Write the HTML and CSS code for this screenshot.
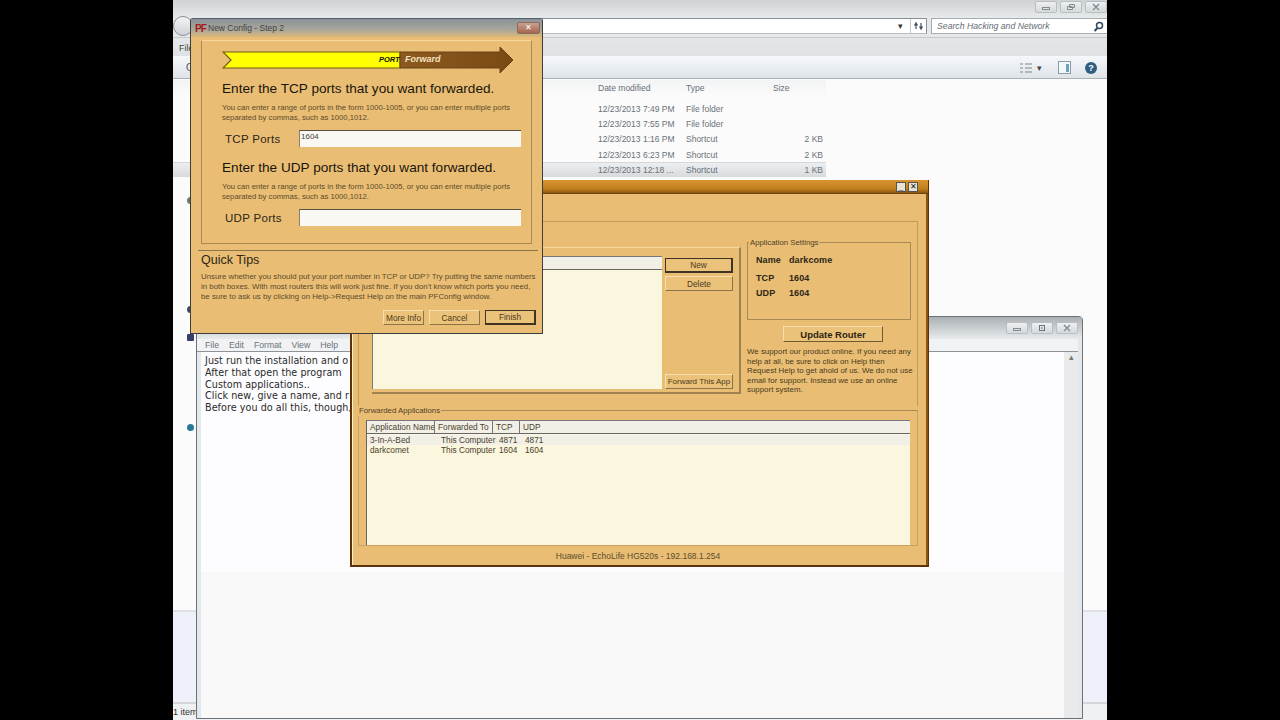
FILE: index.html
```html
<!DOCTYPE html>
<html lang="en">
<head>
    <meta charset="UTF-8">
    <title>New Config - Step 2</title>
    <link rel="stylesheet" href="styles.css">
</head>
<body>
    <div class="screen">
        <!-- explorer window behind everything -->
        <div class="explorer">
            <div class="exp-title">
                <div class="caption-btns">
                    <span class="cap-btn"><svg width="10" height="8" viewBox="0 0 10 8"><rect x="1.5" y="4.5" width="7" height="2" fill="none" stroke="#858b90"/></svg></span>
                    <span class="cap-btn"><svg width="10" height="8" viewBox="0 0 10 8"><path d="M3.5 1.5h5v3h-5zM1.5 3.5h5v3h-5z" fill="#e6e9eb" stroke="#858b90"/></svg></span>
                    <span class="cap-btn"><svg width="10" height="8" viewBox="0 0 10 8"><path d="M2 1l6 6M8 1L2 7" stroke="#858b90" stroke-width="1.4"/></svg></span>
                </div>
            </div>
            <div class="exp-address">
                <div class="back-orb"></div>
                <div class="addr-box">
                    <span class="addr-arrow">&#9662;</span>
                    <span class="addr-refresh">
                        <svg width="14" height="10" viewBox="0 0 14 10"><path d="M4 8V3M2.5 4.5L4 2l1.5 2.5M9 2v5M7.500 5.500L9 8l1.500-2.500" fill="none" stroke="#3d4a5c" stroke-width="1.200"/></svg>
                    </span>
                </div>
                <div class="search-box">
                    <span>Search Hacking and Network</span>
                    <svg width="11" height="11" viewBox="0 0 11 11"><circle cx="6.500" cy="4.500" r="3" fill="none" stroke="#30465f" stroke-width="1.500"/><path d="M4.500 7L1.500 10" stroke="#30465f" stroke-width="2"/></svg>
                </div>
            </div>
            <div class="exp-menu"><span>File</span></div>
            <div class="exp-toolbar">
                <span class="tool-o">O</span>
                <div class="tool-icons">
                    <svg width="14" height="12" viewBox="0 0 14 12"><path d="M1 2h3M1 6h3M1 10h3M6 2h7M6 6h7M6 10h7" stroke="#a3a8ae" stroke-width="1.500"/></svg>
                    <span class="tool-caret">&#9662;</span>
                    <svg class="tool-pane" width="13" height="13" viewBox="0 0 13 13"><rect x="0.500" y="0.500" width="12" height="12" fill="#f4f7fa" stroke="#8d9ba6"/><rect x="8" y="3" width="3" height="8" fill="#6ba1bb"/></svg>
                    <span class="tool-help">?</span>
                </div>
            </div>
            <div class="file-list">
                <div class="file-row file-head"><span>Date modified</span><span>Type</span><span>Size</span></div>
                <div class="file-row"><span>12/23/2013 7:49 PM</span><span>File folder</span><span></span></div>
                <div class="file-row"><span>12/23/2013 7:55 PM</span><span>File folder</span><span></span></div>
                <div class="file-row"><span>12/23/2013 1:16 PM</span><span>Shortcut</span><span class="size">2 KB</span></div>
                <div class="file-row"><span>12/23/2013 6:23 PM</span><span>Shortcut</span><span class="size">2 KB</span></div>
                <div class="file-row file-sel"><span>12/23/2013 12:18 ...</span><span>Shortcut</span><span class="size">1 KB</span></div>
            </div>
            <div class="exp-details"></div>
            <div class="exp-status">1 item</div>
            <i class="desk-icon di-1"></i>
            <i class="desk-icon di-2"></i>
            <i class="desk-icon di-3"></i>
            <i class="desk-icon di-4"></i>
        </div>

        <!-- notepad -->
        <div class="notepad">
            <div class="np-title">
                <div class="caption-btns">
                    <span class="cap-btn"><svg width="10" height="8" viewBox="0 0 10 8"><rect x="1.500" y="4.500" width="7" height="2" fill="none" stroke="#858b90"/></svg></span>
                    <span class="cap-btn"><svg width="10" height="8" viewBox="0 0 10 8"><rect x="2.500" y="1.500" width="5" height="5" fill="none" stroke="#6f757a"/><path d="M4 4h2" stroke="#6f757a"/></svg></span>
                    <span class="cap-btn"><svg width="10" height="8" viewBox="0 0 10 8"><path d="M2 1l6 6M8 1L2 7" stroke="#858b90" stroke-width="1.400"/></svg></span>
                </div>
            </div>
            <div class="np-menu"><span>File</span><span>Edit</span><span>Format</span><span>View</span><span>Help</span></div>
            <div class="np-body">
                <div class="np-text">Just run the installation and o
After that open the program
Custom applications..
Click new, give a name, and r
Before you do all this, though,</div>
                <div class="np-scroll"><span>&#9652;</span></div>
            </div>
        </div>

        <!-- port forward main window -->
        <div class="pf-main">
            <div class="pf-title">
                <span class="pf-btn">_</span><span class="pf-btn">&#10005;</span>
            </div>
            <div class="pf-body">
                <div class="pf-upper">
                    <div class="pf-apps">
                        <div class="pf-applist">
                            <div class="pf-applist-sel"></div>
                        </div>
                        <div class="pf-appbtns">
                            <button class="btn btn-default">New</button>
                            <button class="btn">Delete</button>
                            <button class="btn btn-forward">Forward This App</button>
                        </div>
                    </div>
                    <div class="pf-side">
                        <div class="groupbox settings">
                            <span class="legend">Application Settings</span>
                            <div class="set-row set-name"><b>Name</b><b>darkcome</b></div>
                            <div class="set-row"><b>TCP</b><b>1604</b></div>
                            <div class="set-row"><b>UDP</b><b>1604</b></div>
                        </div>
                        <button class="btn btn-update">Update Router</button>
                        <p class="support">We support our product online. If you need any help at all, be sure to click on Help then Request Help to get ahold of us. We do not use email for support. Instead we use an online support system.</p>
                    </div>
                </div>
                <div class="groupbox forwarded">
                    <span class="legend">Forwarded Applications</span>
                    <div class="fw-list">
                        <div class="fw-row fw-head"><span>Application Name</span><span>Forwarded To</span><span>TCP</span><span>UDP</span></div>
                        <div class="fw-row fw-first"><span>3-In-A-Bed</span><span>This Computer</span><span>4871</span><span>4871</span></div>
                        <div class="fw-row"><span>darkcomet</span><span>This Computer</span><span>1604</span><span>1604</span></div>
                    </div>
                </div>
                <div class="pf-status">Huawei - EchoLife HG520s - 192.168.1.254</div>
            </div>
        </div>

        <!-- step 2 dialog -->
        <div class="dialog">
            <div class="dlg-title">
                <span class="dlg-logo">PF</span>
                <span class="dlg-caption">New Config - Step 2</span>
                <span class="dlg-close">&#10005;</span>
            </div>
            <div class="dlg-inner">
                <div class="banner">
                    <svg width="292" height="26" viewBox="0 0 292 26">
                        <defs>
                            <linearGradient id="arrow-fill" x1="0" x2="1" y1="0" y2="0">
                                <stop offset="0" stop-color="#8c5a20"/>
                                <stop offset="1" stop-color="#7a4a14"/>
                            </linearGradient>
                        </defs>
                        <path d="M1 5H178V21H1L9 13Z" fill="#ffff00" stroke="#6e5a14" stroke-width="1.200"/>
                        <path d="M178 5H278V0L291 13L278 26V21H178Z" fill="url(#arrow-fill)" stroke="#6b4212"/>
                    </svg>
                    <span class="banner-port">PORT</span>
                    <span class="banner-fwd">Forward</span>
                </div>
                <h2>Enter the TCP ports that you want forwarded.</h2>
                <p class="hint">You can enter a range of ports in the form 1000-1005, or you can enter multiple ports separated by commas, such as 1000,1012.</p>
                <div class="port-row"><label>TCP Ports</label><div class="port-input">1604</div></div>
                <h2>Enter the UDP ports that you want forwarded.</h2>
                <p class="hint">You can enter a range of ports in the form 1000-1005, or you can enter multiple ports separated by commas, such as 1000,1012.</p>
                <div class="port-row"><label>UDP Ports</label><div class="port-input"></div></div>
            </div>
            <div class="tips">
                <h3>Quick Tips</h3>
                <p>Unsure whether you should put your port number in TCP or UDP? Try putting the same numbers in both boxes. With most routers this will work just fine. If you don't know which ports you need, be sure to ask us by clicking on Help-&gt;Request Help on the main PFConfig window.</p>
                <div class="dlg-btns">
                    <button class="btn btn-more">More Info</button>
                    <button class="btn btn-cancel">Cancel</button>
                    <button class="btn btn-default btn-finish">Finish</button>
                </div>
            </div>
        </div>
    </div>
</body>
</html>
```
FILE: styles.css
```css
*{
    margin: 0;
    padding: 0;
    box-sizing: border-box;
}
body{
    background-color: #000;
    font-family: "Liberation Sans", Arial, sans-serif;
    overflow: hidden;
}
.screen{
    position: relative;
    width: 934px;
    height: 720px;
    margin-left: 173px;
    background-color: #f9f9fa;
    overflow: hidden;
}

/* explorer */
.explorer{
    position: absolute;
    inset: 0;
    display: flex;
    flex-direction: column;
    color: #68717a;
}
.exp-title{
    height: 17px;
    display: flex;
    justify-content: flex-end;
    background: linear-gradient(#cfd2d3, #e6e9ea);
}
.caption-btns{
    display: flex;
    gap: 3px;
}
.cap-btn{
    width: 22px;
    height: 12px;
    display: flex;
    align-items: center;
    justify-content: center;
    border: 1px solid #b9bec2;
    border-radius: 2px;
    background: linear-gradient(#eef0f2, #d5d9dc);
}
.exp-title .caption-btns{
    margin-top: 1px;
}
.exp-address{
    height: 20px;
    display: flex;
    align-items: flex-start;
    gap: 4px;
    background-color: #e6e9ea;
}
.back-orb{
    width: 20px;
    height: 20px;
    margin-top: -1px;
    border: 1px solid #888f96;
    border-radius: 50%;
    background: linear-gradient(#f2f3f4, #cfd3d6);
}
.addr-box{
    flex: 1;
    height: 16px;
    margin-top: 1px;
    border: 1px solid #8a9096;
    border-bottom-color: #b8bdc1;
    background-color: #fff;
    display: flex;
    justify-content: flex-end;
    align-items: center;
    color: #333;
    font-size: 9px;
}
.addr-arrow{
    margin-right: 7px;
}
.addr-refresh{
    width: 16px;
    height: 14px;
    display: flex;
    align-items: center;
    justify-content: center;
    border-left: 1px solid #c5c9cc;
}
.search-box{
    width: 176px;
    height: 16px;
    margin-top: 1px;
    padding: 0 3px 0 5px;
    border: 1px solid #a7adb3;
    border-right: 0;
    background-color: #fff;
    display: flex;
    align-items: center;
    justify-content: space-between;
    font-size: 8.700px;
    font-style: italic;
    color: #666d74;
}
.exp-menu{
    height: 19px;
    padding: 5px 0 0 6px;
    border-top: 1px solid #c6cacd;
    background: linear-gradient(#e4e7ea, #dfe2e5);
    font-size: 9px;
    color: #444;
}
.exp-toolbar{
    height: 23px;
    padding: 0 10px 0 13px;
    display: flex;
    justify-content: space-between;
    align-items: center;
    border-top: 1px solid #f5f7f8;
    border-bottom: 1px solid #aab0b5;
    background: linear-gradient(#f4f7fa, #dfe4e9);
    font-size: 10px;
    color: #555;
}
.tool-icons{
    display: flex;
    align-items: center;
}
.tool-caret{
    margin-left: 4px;
    font-size: 9px;
    color: #444;
}
.tool-pane{
    margin-left: 16px;
}
.tool-help{
    width: 12px;
    height: 12px;
    margin-left: 14px;
    border-radius: 50%;
    background-color: #2e5f83;
    color: #fff;
    font-size: 9px;
    font-weight: bold;
    line-height: 12px;
    text-align: center;
}
.file-list{
    flex: 1;
    padding-top: 1px;
    background-color: #fbfbfb;
    font-size: 8.500px;
}
.file-row{
    width: 653px;
    height: 15.300px;
    display: grid;
    grid-template-columns: 88px 87px 53px;
    align-items: center;
    padding-left: 425px;
}
.file-row .size{
    text-align: right;
    padding-right: 3px;
}
.file-head{
    height: 22px;
    margin-bottom: -1px;
    padding-bottom: 7px;
    background: linear-gradient(#f2f3f4, #fbfbfb 70%);
}
.file-sel{
    background: linear-gradient(#eceff1, #d8dadc);
    border-top: 1px solid #d5d7d9;
}
.exp-details{
    height: 92px;
    background-color: #eef0fa;
    border-top: 2px solid #dfe1e4;
}
.exp-status{
    height: 18px;
    padding-top: 3px;
    background-color: #f0f1f2;
    border-top: 2px solid #d5d6d8;
    font-size: 9px;
    color: #333;
}
.desk-icon{
    position: absolute;
    left: 14px;
    width: 7px;
    height: 7px;
    border-radius: 50%;
    background-color: #6c7a78;
}
.di-1{ top: 197px; }
.di-2{ top: 306px; background-color: #3b4a66; }
.di-3{ top: 334px; background-color: #34406b; border-radius: 1px; }
.di-4{ top: 424px; background-color: #2b7896; }

/* notepad */
.notepad{
    position: absolute;
    left: 23px;
    top: 316px;
    width: 887px;
    height: 403px;
    display: flex;
    flex-direction: column;
    border: 1px solid #6b7278;
    border-radius: 4px 4px 0 0;
    background-color: #e3e8ec;
}
.np-title{
    height: 22px;
    padding: 5px 4px 0 0;
    display: flex;
    justify-content: flex-end;
    background: linear-gradient(#aab0b4, #e8ebed);
}
.np-menu{
    height: 13px;
    margin-right: 4px;
    padding-left: 8px;
    display: flex;
    gap: 10px;
    align-items: center;
    background-color: #f0f2f4;
    border-bottom: 1px solid #8d9398;
    font-size: 8.700px;
    color: #6a717a;
}
.np-body{
    flex: 1;
    margin: 0 4px;
    display: flex;
    justify-content: space-between;
    background: linear-gradient(#fdfcfe 60%, #f9f9f9 60%);
}
.np-text{
    padding: 3px 0 0 4px;
    white-space: pre;
    font-family: "DejaVu Sans", Verdana, sans-serif;
    font-size: 9.600px;
    line-height: 11.800px;
    letter-spacing: 0.050px;
    color: #2a2a2a;
}
.np-scroll{
    width: 14px;
    background-color: #e8eaec;
    text-align: center;
    font-size: 9px;
    color: #777;
}

/* port forward main window */
.pf-main{
    position: absolute;
    left: 177px;
    top: 180px;
    width: 579px;
    height: 387px;
    display: flex;
    flex-direction: column;
    border: 1px solid #5e3208;
    border-width: 0 1px 2px 2px;
    background-color: #e9be74;
}
.pf-title{
    height: 14px;
    padding: 2px 10px 0 0;
    display: flex;
    justify-content: flex-end;
    gap: 2px;
    background: linear-gradient(#d9952f, #bf7d1c 70%, #8a5410);
    border-bottom: 1px solid #6e430c;
}
.pf-btn{
    width: 10px;
    height: 10px;
    background-color: #e8e2d2;
    border: 1px solid #555;
    color: #222;
    font-size: 8px;
    line-height: 8px;
    text-align: center;
}
.pf-body{
    flex: 1;
    display: flex;
    flex-direction: column;
    padding: 27px 8px 0 5px;
    border-left: 1px solid #fff0c8;
    border-right: 2px solid #8a5410;
}
.pf-upper{
    height: 185px;
    display: flex;
    padding: 25px 6px 0 13px;
    border: 1px solid #c39c5d;
    border-bottom: 0;
}
.pf-apps{
    width: 369px;
    height: 147px;
    display: flex;
    gap: 3px;
    padding: 8px 6px 3px 0;
    border-right: 2px solid #a08250;
    border-bottom: 2px solid #a08250;
    border-top: 1px solid #f5d9a0;
}
.pf-applist{
    width: 290px;
    border-left: 1px solid #777;
    background-color: #fbf6de;
}
.pf-applist-sel{
    height: 14px;
    background-color: #f1efe6;
    border-top: 1px solid #777;
    border-bottom: 1px solid #666;
}
.pf-appbtns{
    width: 68px;
    display: flex;
    flex-direction: column;
    gap: 3px;
    padding-top: 2px;
}
.btn{
    width: 68px;
    height: 15px;
    border: 1px solid;
    border-color: #f9dfab #8c7347 #8c7347 #f9dfab;
    background-color: #ebc279;
    font-family: "Liberation Sans", Arial, sans-serif;
    font-size: 8.300px;
    white-space: nowrap;
    color: #4a3a20;
}
.btn-default{
    border: 1px solid #3f3423;
    border-right-width: 2px;
    border-bottom-width: 2px;
}
.btn-forward{
    margin-top: auto;
    font-size: 8px;
}
.pf-side{
    width: 164px;
    margin-left: 6px;
    margin-top: -5px;
    display: flex;
    flex-direction: column;
}
.groupbox{
    position: relative;
    border: 1px solid #a98a55;
}
.legend{
    position: absolute;
    left: 1px;
    top: -5px;
    padding: 0 1px;
    background-color: #e9be74;
    font-size: 7.800px;
    line-height: 10px;
    white-space: nowrap;
    color: #4f4128;
}
.settings{
    height: 78px;
    padding: 10px 0 0 8px;
}
.set-row{
    display: grid;
    grid-template-columns: 33px 1fr;
    height: 14.500px;
    font-size: 9px;
    line-height: 14px;
    letter-spacing: 0.100px;
    color: #2c2516;
}
.set-name{
    height: 18px;
}
.btn-update{
    width: 100px;
    height: 16px;
    margin: 6px 0 0 36px;
    font-size: 9.500px;
    font-weight: bold;
    color: #2c2516;
    border-color: #f9dfab #6f5a36 #6f5a36 #f9dfab;
}
.support{
    margin-top: 5px;
    width: 168px;
    font-size: 7.900px;
    line-height: 9.600px;
    color: #4a3a20;
}
.forwarded{
    height: 136px;
    margin-top: 4px;
    padding: 9px 7px 0 7px;
    border-color: #a98a55 #c9a263 #c9a263 #c9a263;
}
.forwarded .legend{
    left: -1px;
}
.fw-list{
    height: 125px;
    border-left: 1px solid #666;
    border-top: 1px solid #777;
    background-color: #fbf6de;
    font-size: 8.300px;
    color: #4a3f2c;
}
.fw-row{
    display: grid;
    grid-template-columns: 71px 58px 26px 1fr;
    height: 10.300px;
    line-height: 10px;
    padding-left: 3px;
    white-space: nowrap;
}
.fw-head{
    height: 13px;
    line-height: 12px;
    margin-bottom: 1px;
    padding-left: 0;
    grid-template-columns: 68px 58px 27px 1fr;
    background-color: #f1efe6;
    border-bottom: 1px solid #666;
}
.fw-head span{
    padding-left: 3px;
    border-right: 1px solid #777;
    overflow: hidden;
}
.fw-head span:last-child{
    border-right: 0;
}
.fw-first{
    background-color: #f1efe6;
}
.pf-status{
    padding-top: 5px;
    text-align: center;
    font-size: 8.500px;
    color: #5c4c30;
}

/* step 2 dialog */
.dialog{
    position: absolute;
    left: 17px;
    top: 18px;
    width: 353px;
    height: 316px;
    display: flex;
    flex-direction: column;
    border: 1px solid #3d3d3d;
    border-top-color: #55606b;
    border-radius: 3px 3px 0 0;
    background-color: #e9be74;
}
.dlg-title{
    height: 18px;
    padding: 0 2px 0 4px;
    display: flex;
    align-items: center;
    background: linear-gradient(#8b9298, #a8a79a 60%, #dcb878);
    font-size: 8.500px;
    color: #444;
}
.dlg-logo{
    width: 10px;
    font-size: 10px;
    font-weight: bold;
    color: #a8171a;
    letter-spacing: -1px;
}
.dlg-caption{
    margin-left: 3px;
    flex: 1;
}
.dlg-close{
    width: 23px;
    height: 12px;
    border: 1px solid #8a6a5c;
    border-radius: 2px;
    background: linear-gradient(#c9a090, #a8654f);
    color: #fff;
    font-size: 8px;
    line-height: 10px;
    text-align: center;
}
.dlg-inner{
    height: 204px;
    margin: 3px 10px 0 10px;
    padding: 6px 0 0 20px;
    border: 1px solid #a98a55;
    border-top-color: #f5d9a0;
}
.banner{
    position: relative;
    width: 292px;
    height: 26px;
    margin-bottom: 8px;
}
.banner svg{
    display: block;
}
.banner-port{
    position: absolute;
    left: 157px;
    top: 8px;
    font-size: 7.500px;
    font-weight: bold;
    font-style: italic;
    color: #111;
}
.banner-fwd{
    position: absolute;
    left: 183px;
    top: 7px;
    font-size: 9px;
    font-weight: bold;
    font-style: italic;
    color: #f4e4c0;
}
h2{
    font-size: 13.600px;
    font-weight: normal;
    line-height: 16px;
    color: #1a150b;
}
.hint{
    width: 296px;
    margin-top: 6px;
    font-size: 7.700px;
    line-height: 9.600px;
    color: #5c4a2a;
}
.port-row{
    display: flex;
    align-items: center;
    height: 19px;
    margin: 7px 0 12px 3px;
}
.port-row label{
    width: 74px;
    font-size: 11.500px;
    letter-spacing: 0.300px;
    color: #2c2516;
}
.port-input{
    width: 222px;
    height: 17px;
    padding-left: 1px;
    background-color: #faf8f2;
    border-top: 1px solid #55503f;
    border-left: 1px solid #8a8068;
    font-size: 8px;
    line-height: 12px;
    color: #444;
}
.tips{
    flex: 1;
    margin: 6px 4px 0 7px;
    padding: 1px 2px 0 3px;
    border-top: 1px solid #8d744a;
}
h3{
    font-size: 12.500px;
    font-weight: normal;
    line-height: 16px;
    color: #2c2516;
}
.tips p{
    margin-top: 4px;
    font-size: 7.850px;
    line-height: 9.800px;
    color: #5c4a2a;
}
.dlg-btns{
    display: flex;
    justify-content: flex-end;
    gap: 5px;
    margin-top: 9px;
}
.btn-more{
    width: 41px;
}
.btn-cancel{
    width: 51px;
}
.btn-finish{
    width: 51px;
}
```
